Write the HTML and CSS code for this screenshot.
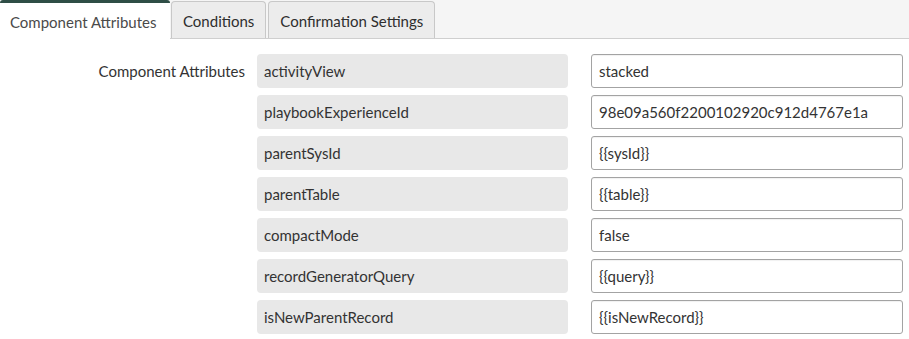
FILE: index.html
```html
<!DOCTYPE html>
<html>
<head>
<meta charset="utf-8">
<link rel="stylesheet" href="styles.css">
</head>
<body>
<div class="tabs">
  <div class="tab active">Component Attributes</div>
  <div class="tab">Conditions</div>
  <div class="tab">Confirmation Settings</div>
</div>
<div class="form">
  <div class="row">
    <div class="label">Component Attributes</div>
    <div class="key">activityView</div>
    <div class="val">stacked</div>
  </div>
  <div class="row">
    <div class="label"></div>
    <div class="key">playbookExperienceId</div>
    <div class="val">98e09a560f2200102920c912d4767e1a</div>
  </div>
  <div class="row">
    <div class="label"></div>
    <div class="key">parentSysId</div>
    <div class="val">{{sysId}}</div>
  </div>
  <div class="row">
    <div class="label"></div>
    <div class="key">parentTable</div>
    <div class="val">{{table}}</div>
  </div>
  <div class="row">
    <div class="label"></div>
    <div class="key">compactMode</div>
    <div class="val">false</div>
  </div>
  <div class="row">
    <div class="label"></div>
    <div class="key">recordGeneratorQuery</div>
    <div class="val">{{query}}</div>
  </div>
  <div class="row">
    <div class="label"></div>
    <div class="key">isNewParentRecord</div>
    <div class="val">{{isNewRecord}}</div>
  </div>
</div>
</body>
</html>
```
FILE: styles.css
```css
html, body {
  margin: 0;
  padding: 0;
  background: #ffffff;
  font-family: Lato, "Open Sans", sans-serif;
  font-size: 15px;
  color: #333333;
}

.tabs {
  display: flex;
  align-items: flex-end;
  height: 38px;
  background: #f5f5f5;
  border-bottom: 1px solid #cfcfcf;
}

.tab {
  box-sizing: border-box;
  height: 37px;
  margin-left: 1px;
  padding: 1px 11px 0;
  display: flex;
  align-items: center;
  background: #ececec;
  border: 1px solid #c8c8c8;
  border-bottom: none;
  border-radius: 4px 4px 0 0;
  color: #2e2e2e;
}

.tab + .tab {
  margin-left: 2px;
}

.tab.active {
  margin-left: 0;
  width: 170px;
  height: 39px;
  margin-bottom: -1px;
  padding: 2px 10px 0;
  background: #ffffff;
  border: none;
  border-top: 3px solid #2f4e46;
  border-radius: 3px 3px 0 0;
  color: #4a4a4a;
}

.tab.active + .tab {
  margin-left: 1px;
}

.form {
  padding-top: 15px;
  display: flex;
  flex-direction: column;
  gap: 7px;
}

.row {
  display: flex;
  height: 34px;
}

.label {
  width: 245px;
  display: flex;
  align-items: center;
  justify-content: flex-end;
}

.key {
  box-sizing: border-box;
  width: 311px;
  margin-left: 12px;
  padding-left: 7px;
  display: flex;
  align-items: center;
  background: #e8e8e8;
  border-radius: 4px;
}

.val {
  box-sizing: border-box;
  width: 312px;
  margin-left: 23px;
  padding-left: 7px;
  display: flex;
  align-items: center;
  border: 1px solid #a3a3a3;
  border-radius: 3px;
  background: #ffffff;
  box-shadow: inset 0 1px 1px rgba(0,0,0,0.06);
}
```
